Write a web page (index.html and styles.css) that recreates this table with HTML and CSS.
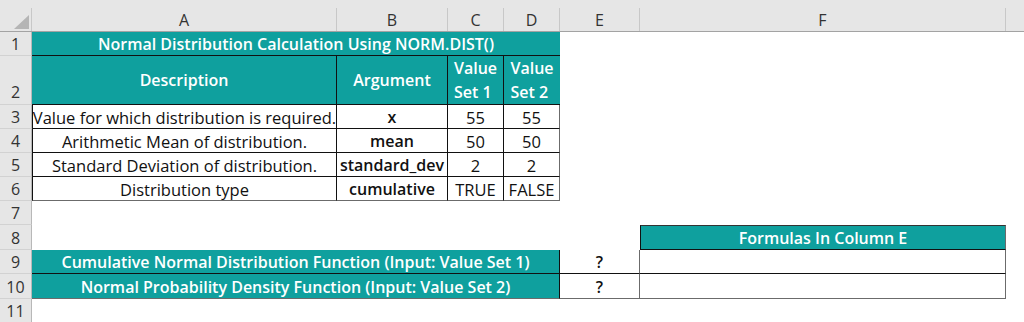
FILE: index.html
```html
<!DOCTYPE html>
<html>
<head>
<meta charset="utf-8">
<link rel="stylesheet" href="styles.css">
</head>
<body>
<div class="sheet">
  <div class="topbar"></div>
  <div class="row hdr">
    <div class="corner"><svg class="tri" width="32" height="24" viewBox="0 0 32 24"><polygon points="29,7 29,21 14,21" fill="#b5b5b5"/></svg></div>
    <div class="ch w-a">A</div>
    <div class="ch w-b">B</div>
    <div class="ch w-c">C</div>
    <div class="ch w-d">D</div>
    <div class="ch w-e">E</div>
    <div class="ch w-f">F</div>
    <div class="ch w-g"></div>
  </div>

  <div class="row h24">
    <div class="rh">1</div>
    <div class="cell w-ad teal bold bb">Normal Distribution Calculation Using NORM.DIST()</div>
  </div>

  <div class="row h49">
    <div class="rh rh-bottom">2</div>
    <div class="cell w-a teal bold br bb mid">Description</div>
    <div class="cell w-b teal bold br bb mid">Argument</div>
    <div class="cell w-c teal bold br bb wrap">Value<br>Set 1</div>
    <div class="cell w-d teal bold bb wrap">Value<br>Set 2</div>
  </div>

  <div class="row h24">
    <div class="rh">3</div>
    <div class="cell w-a bl br bb">Value for which distribution is required.</div>
    <div class="cell w-b br bb bold">x</div>
    <div class="cell w-c br bb">55</div>
    <div class="cell w-d bro bb">55</div>
  </div>

  <div class="row h24">
    <div class="rh">4</div>
    <div class="cell w-a bl br bb">Arithmetic Mean of distribution.</div>
    <div class="cell w-b br bb bold">mean</div>
    <div class="cell w-c br bb">50</div>
    <div class="cell w-d bro bb">50</div>
  </div>

  <div class="row h24">
    <div class="rh">5</div>
    <div class="cell w-a bl br bb">Standard Deviation of distribution.</div>
    <div class="cell w-b br bb bold">standard_dev</div>
    <div class="cell w-c br bb">2</div>
    <div class="cell w-d bro bb">2</div>
  </div>

  <div class="row h24">
    <div class="rh">6</div>
    <div class="cell w-a bl br bbo">Distribution type</div>
    <div class="cell w-b br bbo bold">cumulative</div>
    <div class="cell w-c br bbo">TRUE</div>
    <div class="cell w-d bro bbo">FALSE</div>
  </div>

  <div class="row h24">
    <div class="rh">7</div>
  </div>

  <div class="row h25">
    <div class="rh">8</div>
    <div class="cell w-ae"></div>
    <div class="cell w-f teal bold btd bl bro bb">Formulas In Column E</div>
  </div>

  <div class="row h24">
    <div class="rh">9</div>
    <div class="cell w-ad teal bold br bb">Cumulative Normal Distribution Function (Input: Value Set 1)</div>
    <div class="cell w-e bro bb bold">?</div>
    <div class="cell w-f bro bb"></div>
  </div>

  <div class="row h25">
    <div class="rh">10</div>
    <div class="cell w-ad teal bold br bbo">Normal Probability Density Function (Input: Value Set 2)</div>
    <div class="cell w-e bro bbo bold">?</div>
    <div class="cell w-f bro bbo"></div>
  </div>

  <div class="row h24">
    <div class="rh">11</div>
  </div>
</div>
</body>
</html>
```
FILE: styles.css
```css
* { box-sizing: border-box; }
html, body { margin: 0; padding: 0; background: #fff; }
body {
  width: 1024px;
  height: 322px;
  overflow: hidden;
  font-family: "Open Sans", "Liberation Sans", sans-serif;
  font-size: 16.5px;
  color: #111;
}
.sheet { width: 1024px; }
.topbar { height: 8px; background: #e6e6e6; }
.row { display: flex; }
.hdr {
  height: 24px;
  background: #e6e6e6;
  border-bottom: 1px solid #a3a3a3;
}
.corner {
  width: 32px;
  flex: none;
  border-right: 1px solid #c8c8c8;
  position: relative;
}
.tri { display: block; }
.ch {
  flex: none;
  border-right: 1px solid #c8c8c8;
  display: flex;
  align-items: center;
  justify-content: center;
  color: #333;
  font-size: 16px;
  padding-top: 1px;
}
.w-a { width: 305px; }
.w-b { width: 111px; }
.w-c { width: 56px; }
.w-d { width: 56px; }
.w-e { width: 80px; }
.w-f { width: 366px; }
.w-g { width: 18px; border-right: none; }
.w-ad { width: 528px; }
.w-ae { width: 608px; }

.h24 { height: 24px; }
.h25 { height: 25px; }
.h49 { height: 49px; }

.rh {
  width: 32px;
  flex: none;
  background: #e6e6e6;
  border-right: 1px solid #b8b8b8;
  border-bottom: 1px solid #d2d2d2;
  color: #333;
  font-size: 16px;
  display: flex;
  align-items: center;
  justify-content: center;
  padding-top: 1px;
}
.rh-bottom { align-items: flex-end; padding-bottom: 1px; }
.cell {
  flex: none;
  display: flex;
  align-items: center;
  justify-content: center;
  padding-top: 1px;
  white-space: nowrap;
  overflow: hidden;
}
.teal { background: #0fa09e; color: #fff; }
.bold { font-weight: 600; font-size: 16px; }
.bl { border-left: 1px solid #111; }
.br { border-right: 1px solid #111; }
.bro { border-right: 1px solid #6b6b6b; }
.bb { border-bottom: 1px solid #111; }
.bbo { border-bottom: 1px solid #6b6b6b; }
.btd { border-top: 1px solid #333; }
.mid { padding-top: 0; }
.wrap {
  flex-direction: column;
  line-height: 24px;
  padding-top: 0;
  white-space: nowrap;
}
```
